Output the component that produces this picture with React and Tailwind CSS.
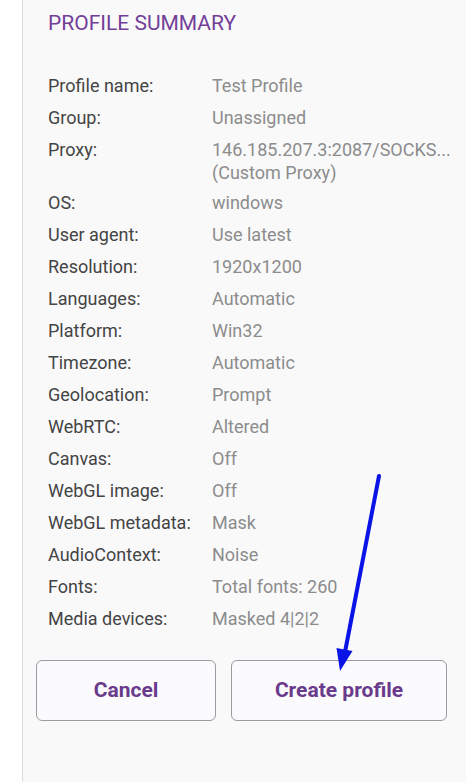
const rows = [
  ["Profile name:", ["Test Profile"]],
  ["Group:", ["Unassigned"]],
  ["Proxy:", ["146.185.207.3:2087/SOCKS...", "(Custom Proxy)"]],
  ["OS:", ["windows"]],
  ["User agent:", ["Use latest"]],
  ["Resolution:", ["1920x1200"]],
  ["Languages:", ["Automatic"]],
  ["Platform:", ["Win32"]],
  ["Timezone:", ["Automatic"]],
  ["Geolocation:", ["Prompt"]],
  ["WebRTC:", ["Altered"]],
  ["Canvas:", ["Off"]],
  ["WebGL image:", ["Off"]],
  ["WebGL metadata:", ["Mask"]],
  ["AudioContext:", ["Noise"]],
  ["Fonts:", ["Total fonts: 260"]],
  ["Media devices:", ["Masked 4|2|2"]],
];

function Row({ label, values }) {
  return (
    <div className={values.length > 1 ? "flex h-[53px]" : "flex h-[32px]"}>
      <div className="w-[164px] shrink-0 text-[#444444]">{label}</div>
      <div className="text-[#8c8c8c] whitespace-nowrap">
        {values.map((v) => (
          <div key={v}>{v}</div>
        ))}
      </div>
    </div>
  );
}

export default function App() {
  return (
    <div
      className="relative flex h-[782px] w-[466px] overflow-hidden bg-white"
      style={{ fontFamily: "Roboto, 'Noto Sans', sans-serif" }}
    >
      <div className="w-[22px] shrink-0 bg-white" />
      <div className="flex flex-1 flex-col border-l-[1.5px] border-[#dcdcdc] bg-[#f9f9fa]">
        <div className="px-[25px] pt-[10px] text-[21px] leading-[26px] text-[#723f98]">
          PROFILE SUMMARY
        </div>
        <div className="mt-[37.5px] flex flex-col px-[25px] text-[18px] leading-[23px]">
          {rows.map(([label, values]) => (
            <Row key={label} label={label} values={values} />
          ))}
        </div>
        <div className="mt-[21.5px] flex gap-[15px] pl-[13px] pr-[18px]">
          <button className="h-[61px] w-[180px] rounded-[6px] border-[1.5px] border-[#9d9aa2] bg-[#fbfafc] text-[21px] font-bold text-[#6a3a8c]">
            Cancel
          </button>
          <button className="h-[61px] w-[216px] rounded-[6px] border-[1.5px] border-[#9d9aa2] bg-[#fbfafc] text-[21px] font-bold text-[#6a3a8c]">
            Create profile
          </button>
        </div>
      </div>
      <div className="flex w-[3px] shrink-0 flex-col">
        <div className="h-[278px] bg-[#b8b8b8]" />
        <div className="h-[472px] bg-[#4f8a6c]" />
        <div className="flex-1 bg-[#f3f3f3]" />
      </div>
      <svg className="pointer-events-none absolute left-0 top-0" width="466" height="782">
        <line x1="379" y1="476" x2="345" y2="652" stroke="#0a14e6" strokeWidth="4" strokeLinecap="round" />
        <polygon points="336.5,648 352.5,651 340,671" fill="#0a14e6" />
      </svg>
    </div>
  );
}
